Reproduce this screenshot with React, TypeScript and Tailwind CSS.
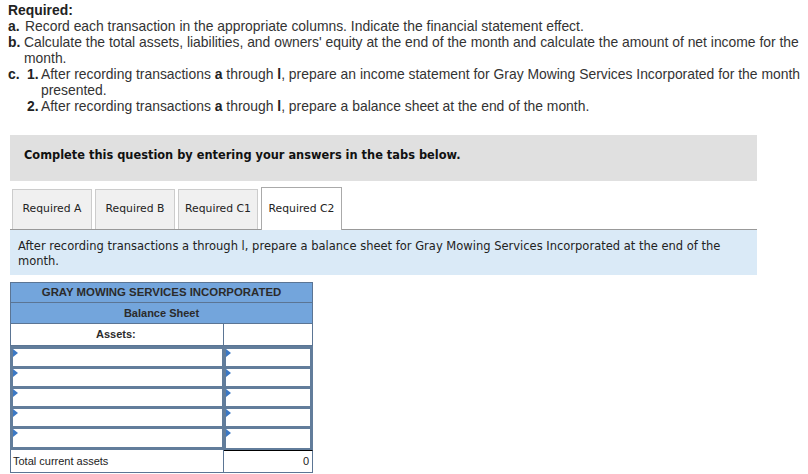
import React from "react";

const Arrow = () => (
  <span className="absolute left-0 top-0 w-0 h-0 border-t-[4px] border-b-[4px] border-l-[5px] border-t-transparent border-b-transparent border-l-[#3b78c4]" />
);

function InputRow({ last }: { last?: boolean }) {
  return (
    <div className={last ? "flex h-[24px]" : "flex h-[20px]"}>
      <div
        className={
          last
            ? "relative w-[214px] border-[3px] border-r-[2px] border-[#627d9b] bg-white"
            : "relative w-[214px] border-[3px] border-r-[2px] border-b-0 border-[#627d9b] bg-white"
        }
      >
        <Arrow />
      </div>
      <div
        className={
          last
            ? "relative flex-1 border-[3px] border-l-[2px] border-b-[2px] border-[#627d9b] bg-white"
            : "relative flex-1 border-[3px] border-l-[2px] border-b-0 border-[#627d9b] bg-white"
        }
      >
        <Arrow />
      </div>
    </div>
  );
}

export default function App() {
  const top = { fontFamily: '"Liberation Sans", Arial, sans-serif' };
  const verd = { fontFamily: '"DejaVu Sans", Verdana, sans-serif' };
  const arial = { fontFamily: '"Liberation Sans", Arial, sans-serif' };
  return (
    <div className="w-[808px] h-[474px] bg-white overflow-hidden relative">
      <div className="pl-[8px] pt-[2px] text-[13.9px] leading-[16px] text-[#333] whitespace-nowrap" style={top}>
        <div className="font-bold text-[#222]">Required:</div>
        <div className="flex">
          <span className="w-[17px] font-bold text-[#222]">a.</span>
          <span>Record each transaction in the appropriate columns. Indicate the financial statement effect.</span>
        </div>
        <div className="flex">
          <span className="w-[16px] font-bold text-[#222]">b.</span>
          <div>
            <div>Calculate the total assets, liabilities, and owners' equity at the end of the month and calculate the amount of net income for the</div>
            <div>month.</div>
          </div>
        </div>
        <div className="flex">
          <span className="w-[19px] font-bold text-[#222]">c.</span>
          <div>
            <div className="flex">
              <span className="w-[14px] font-bold text-[#222]">1.</span>
              <div>
                <div>After recording transactions <b className="text-[#222]">a</b> through <b className="text-[#222]">l</b>, prepare an income statement for Gray Mowing Services Incorporated for the month</div>
                <div>presented.</div>
              </div>
            </div>
            <div className="flex">
              <span className="w-[14px] font-bold text-[#222]">2.</span>
              <span>After recording transactions <b className="text-[#222]">a</b> through <b className="text-[#222]">l</b>, prepare a balance sheet at the end of the month.</span>
            </div>
          </div>
        </div>
      </div>

      <div className="ml-[10px] mt-[21px] w-[747px] h-[46px] bg-[#e0e0e0] flex items-center pl-[14px] pb-[5px]" style={verd}>
        <span className="text-[11.4px] font-bold text-[#111]">Complete this question by entering your answers in the tabs below.</span>
      </div>

      <div className="ml-[10px] mt-[7px] w-[747px]" style={verd}>
        <div className="flex items-end h-[42px] gap-[3px] pl-[2px] border-b border-[#999]">
          {["Required A", "Required B", "Required C1"].map((t) => (
            <div key={t} className="w-[80px] h-[40px] bg-[#f0f0f0] border border-b-0 border-[#ccc] flex items-center justify-center text-[10.8px] text-[#222]">
              {t}
            </div>
          ))}
          <div className="w-[81px] h-[43px] -mb-px bg-white border border-b-0 border-[#aaa] flex items-center justify-center text-[10.8px] text-[#222]">
            Required C2
          </div>
        </div>
        <div className="bg-[#daeaf7] h-[45px] px-[8px] pt-[9px] text-[11.5px] leading-[15px] text-[#222]">
          After recording transactions a through l, prepare a balance sheet for Gray Mowing Services Incorporated at the end of the month.
        </div>
      </div>

      <div className="ml-[10px] mt-[7px] w-[303px] text-[11px] text-[#222]" style={arial}>
        <div className="h-[21px] bg-[#73a5dc] border border-[#5b7594] flex items-center justify-center font-bold text-[11.4px] text-[#2b2b2b]">
          GRAY MOWING SERVICES INCORPORATED
        </div>
        <div className="h-[21px] bg-[#73a5dc] border border-t-0 border-[#5b7594] flex items-center justify-center font-bold text-[#2b2b2b]">
          Balance Sheet
        </div>
        <div className="flex h-[22px]">
          <div className="w-[214px] border border-t-0 border-[#5b7594] flex items-center pl-[85px] font-bold text-[#2b2b2b]">
            Assets:
          </div>
          <div className="flex-1 border border-t-0 border-l-0 border-[#5b7594]" />
        </div>
        <InputRow />
        <InputRow />
        <InputRow />
        <InputRow />
        <InputRow last />
        <div className="flex h-[23px]">
          <div className="w-[214px] border border-t-0 border-[#5b7594] flex items-center pl-[2px]">
            Total current assets
          </div>
          <div className="flex-1 border-r border-b border-[#5b7594] border-t border-t-black flex items-center justify-end pr-[3px]">
            0
          </div>
        </div>
      </div>
    </div>
  );
}
